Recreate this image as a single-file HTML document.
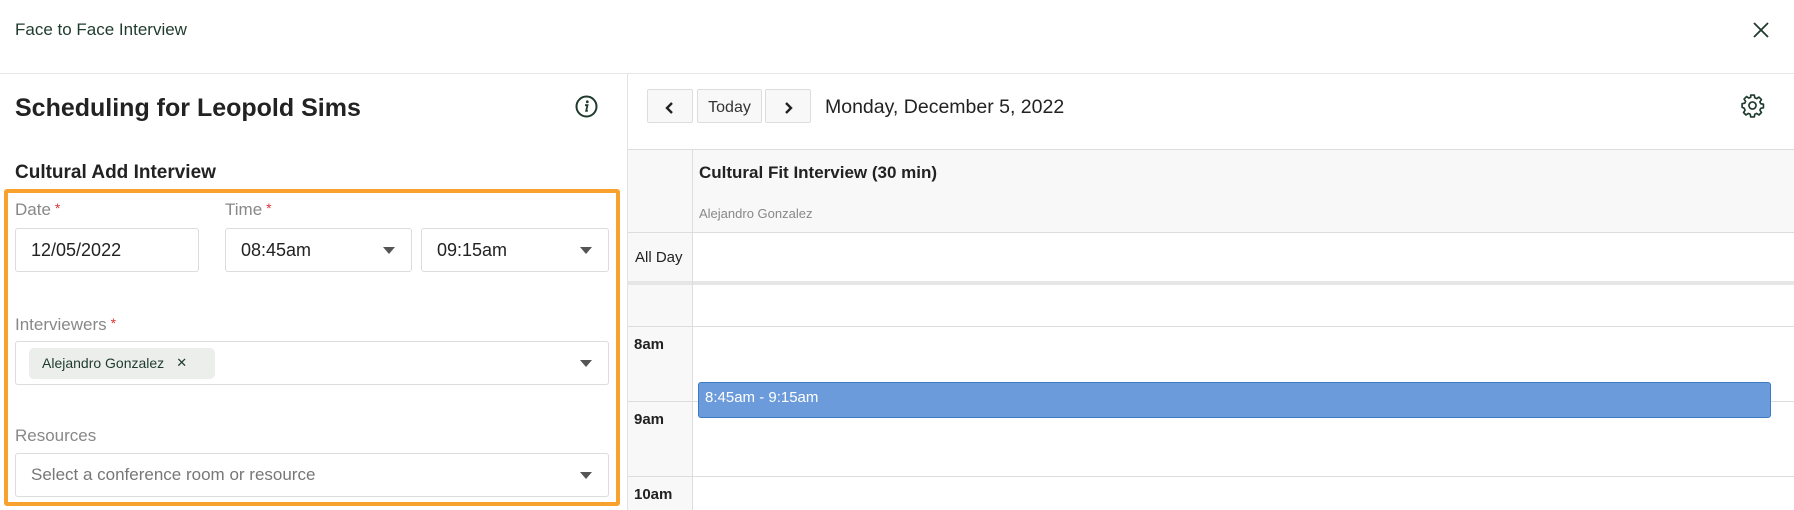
<!DOCTYPE html>
<html><head><meta charset="utf-8"><style>
*{box-sizing:border-box;margin:0;padding:0}
body{width:1794px;height:510px;overflow:hidden;background:#fff;font-family:"Liberation Sans",sans-serif;color:#222;position:relative}
.a{position:absolute}
.lbl{font-size:17px;color:#888}
.req{color:#d33;font-size:14px;margin-left:4px;vertical-align:top}
.inp{position:absolute;border:1px solid #dcdcdc;border-radius:3px;background:#fff;font-size:18px;color:#222;display:flex;align-items:center;padding-left:15px}
.caret{position:absolute;right:16px;top:50%;margin-top:-3px;width:0;height:0;border-left:6px solid transparent;border-right:6px solid transparent;border-top:7px solid #555}
.btn{position:absolute;top:89px;height:34px;border:1px solid #ddd;border-radius:2px;background:#f8f8f8;display:flex;align-items:center;justify-content:center;font-size:16px;color:#333;padding-top:3px}
.hl{position:absolute;left:628px;right:0;height:1px;background:#ddd}
.tl{position:absolute;left:634px;font-size:15px;font-weight:bold;color:#222}
</style></head><body>
<div class="a" style="left:15px;top:20px;font-size:17px;color:#1f3b2e">Face to Face Interview</div>
<svg class="a" style="left:1753px;top:22px" width="16" height="16" viewBox="0 0 16 16"><path d="M1 1L15 15M15 1L1 15" stroke="#1f3b2e" stroke-width="1.8"/></svg>
<div class="a" style="left:0;right:0;top:73px;height:1px;background:#e6e6e6"></div>
<div class="a" style="left:627px;top:74px;width:1px;bottom:0;background:#e3e3e3"></div>

<div class="a" style="left:15px;top:94px;font-size:25px;font-weight:bold;color:#222">Scheduling for Leopold Sims</div>
<svg class="a" style="left:575px;top:95px" width="23" height="23" viewBox="0 0 23 23"><circle cx="11.5" cy="11.5" r="10" fill="none" stroke="#1f3b2e" stroke-width="2"/><circle cx="12.3" cy="6.8" r="1.4" fill="#1f3b2e"/><path d="M10 10.2h2.5l-1.3 5.6h1.6" stroke="#1f3b2e" stroke-width="1.8" fill="none"/></svg>
<div class="a" style="left:15px;top:162px;font-size:19px;font-weight:bold;color:#222">Cultural Add Interview</div>

<div class="a" style="left:4px;top:189px;width:616px;height:317px;border:4px solid #f9a12e;border-radius:3px"></div>
<div class="a lbl" style="left:15px;top:200px">Date<span class="req">*</span></div>
<div class="a lbl" style="left:225px;top:200px">Time<span class="req">*</span></div>
<div class="inp" style="left:15px;top:228px;width:184px;height:44px">12/05/2022</div>
<div class="inp" style="left:225px;top:228px;width:187px;height:44px">08:45am<span class="caret"></span></div>
<div class="inp" style="left:421px;top:228px;width:188px;height:44px">09:15am<span class="caret"></span></div>
<div class="a lbl" style="left:15px;top:315px">Interviewers<span class="req">*</span></div>
<div class="inp" style="left:15px;top:341px;width:594px;height:44px;padding-left:13px"><div style="background:#eceeec;border-radius:5px;height:31px;width:186px;display:flex;align-items:center;padding-left:13px;font-size:14px;color:#1f3b2e">Alejandro Gonzalez<span style="margin-left:12px;font-size:13px">✕</span></div><span class="caret"></span></div>
<div class="a lbl" style="left:15px;top:426px">Resources</div>
<div class="inp" style="left:15px;top:453px;width:594px;height:44px;color:#777;font-size:17px">Select a conference room or resource<span class="caret"></span></div>

<div class="btn" style="left:647px;width:46px"><svg width="12" height="14" viewBox="0 0 12 14"><path d="M8 2L3 7l5 5" stroke="#222" stroke-width="2.4" fill="none"/></svg></div>
<div class="btn" style="left:697px;width:65px">Today</div>
<div class="btn" style="left:765px;width:46px"><svg width="12" height="14" viewBox="0 0 12 14"><path d="M4 2l5 5-5 5" stroke="#222" stroke-width="2.4" fill="none"/></svg></div>
<div class="a" style="left:825px;top:96px;font-size:19.5px;color:#222">Monday, December 5, 2022</div>
<svg class="a" style="left:1740px;top:93px" width="25" height="25" viewBox="0 0 24 24"><path d="M10.3 2h3.4l.5 2.6 1.8.8 2.2-1.5 2.4 2.4-1.5 2.2.8 1.8 2.6.5v3.4l-2.6.5-.8 1.8 1.5 2.2-2.4 2.4-2.2-1.5-1.8.8-.5 2.6h-3.4l-.5-2.6-1.8-.8-2.2 1.5-2.4-2.4 1.5-2.2-.8-1.8L2 13.7v-3.4l2.6-.5.8-1.8-1.5-2.2 2.4-2.4 2.2 1.5 1.8-.8z" fill="none" stroke="#1f3b2e" stroke-width="1.6" stroke-linejoin="round"/><circle cx="12" cy="12" r="3.4" fill="none" stroke="#1f3b2e" stroke-width="1.6"/></svg>

<div class="a" style="left:628px;right:0;top:149px;height:83px;background:#f8f8f8"></div>
<div class="a" style="left:628px;width:64px;top:232px;bottom:0;background:#f8f8f8"></div>
<div class="hl" style="top:149px"></div>
<div class="hl" style="top:232px"></div>
<div class="hl" style="top:281px;height:4px;background:#e6e6e6"></div>
<div class="hl" style="top:326px"></div>
<div class="hl" style="top:401px"></div>
<div class="hl" style="top:476px"></div>
<div class="a" style="left:692px;top:149px;width:1px;bottom:0;background:#ddd"></div>
<div class="a" style="left:699px;top:163px;font-size:17px;font-weight:bold;color:#222">Cultural Fit Interview (30 min)</div>
<div class="a" style="left:699px;top:206px;font-size:13px;color:#888">Alejandro Gonzalez</div>
<div class="a" style="left:635px;top:249px;font-size:15px;color:#222">All Day</div>
<div class="tl" style="top:336px">8am</div>
<div class="tl" style="top:411px">9am</div>
<div class="tl" style="top:486px">10am</div>
<div class="a" style="left:698px;top:382px;width:1073px;height:36px;background:#6c9bdc;border:1px solid #3b7bbf;border-radius:3px;color:#fff;font-size:15px;padding:6px 0 0 6px">8:45am - 9:15am</div>
</body></html>
